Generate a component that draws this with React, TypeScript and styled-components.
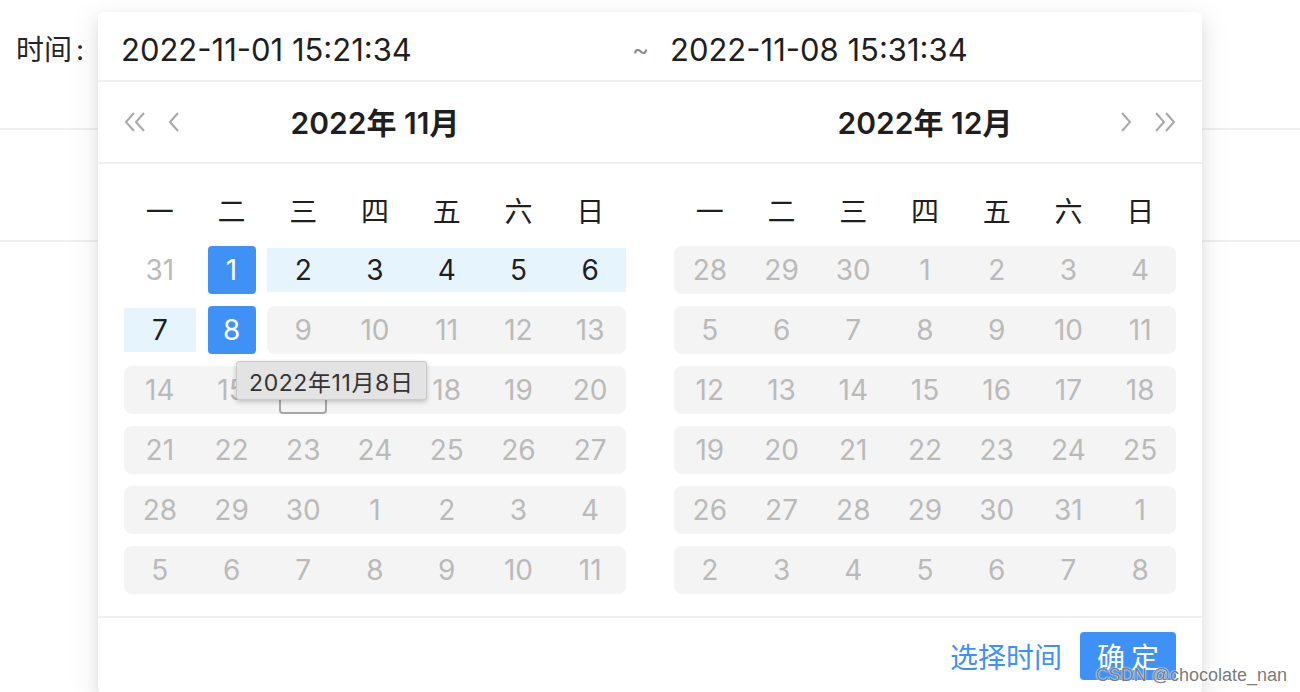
import React from "react";
import styled, { createGlobalStyle, css } from "styled-components";

const GlobalStyle = createGlobalStyle`
  html, body {
    margin: 0;
    height: 100%;
    overflow: hidden;
    background: #fff;
    font-family: Inter, "Noto Sans CJK SC", sans-serif;
    color: #1f1f1f;
  }
`;

const BLUE = "#4091f5";

const Page = styled.div`
  position: relative;
  width: 1300px;
  height: 692px;
`;

const FilterBar = styled.div`
  height: 130px;
  border-bottom: 2px solid #f0f0f0;
  display: flex;
  align-items: flex-start;
  padding: 30px 16px 0;
  box-sizing: border-box;
`;

const Label = styled.label`
  font-size: 28px;
  line-height: 40px;
  color: #262626;
`;

const Colon = styled.span`
  margin: 0 8px 0 4px;
`;

const TableHead = styled.div`
  height: 110px;
  border-bottom: 2px solid #f0f0f0;
`;

const Popup = styled.div`
  position: absolute;
  left: 98px;
  top: 12px;
  width: 1104px;
  background: #fff;
  border-radius: 6px;
  box-shadow: 0 6px 16px 0 rgba(0, 0, 0, 0.08), 0 3px 6px -4px rgba(0, 0, 0, 0.12),
    0 9px 28px 8px rgba(0, 0, 0, 0.05);
`;

const InputRow = styled.div`
  height: 70px;
  box-sizing: border-box;
  padding: 6px 23px 0;
  display: grid;
  grid-template-columns: 509px 40px 1fr;
  align-items: center;
  border-bottom: 2px solid #f0f0f0;
  font-size: 31px;
  color: #1f1f1f;
`;

const Separator = styled.span`
  color: #8c8c8c;
  padding-left: 2px;
  font-size: 26px;
`;

const HeaderRow = styled.div`
  height: 80px;
  display: flex;
  gap: 48px;
  padding: 0 26px;
  border-bottom: 2px solid #f0f0f0;
`;

const PanelHeader = styled.div`
  width: 502px;
  display: grid;
  grid-template-columns: 1fr auto 1fr;
  align-items: center;
`;

const Arrows = styled.div<{ $end?: boolean }>`
  display: flex;
  align-items: center;
  gap: 22px;
  justify-content: ${(p) => (p.$end ? "flex-end" : "flex-start")};
  color: #a8a8a8;
`;

const Title = styled.div`
  font-size: 30px;
  font-weight: 600;
  color: #1f1f1f;
  margin-top: -2px;
`;

const Body = styled.div`
  display: flex;
  gap: 48px;
  padding: 22px 26px;
  border-bottom: 2px solid #f0f0f0;
`;

const Grid = styled.div`
  width: 502px;
  display: grid;
  grid-template-columns: repeat(7, 1fr);
  row-gap: 12px;
`;

const WeekDay = styled.div`
  height: 48px;
  display: flex;
  align-items: center;
  justify-content: center;
  font-size: 28px;
  color: #1f1f1f;
`;

type Kind = "normal" | "out" | "range" | "selected" | "disabled";

const Cell = styled.div<{ $kind: Kind; $left: boolean; $right: boolean }>`
  height: 48px;
  display: flex;
  align-items: center;
  justify-content: center;
  ${(p) =>
    p.$kind === "range" &&
    css`
      background: #e6f4fe;
      height: 44px;
      margin: 2px 0;
    `}
  ${(p) =>
    p.$kind === "disabled" &&
    css`
      background: #f4f4f4;
      border-top-left-radius: ${p.$left ? "8px" : "0"};
      border-bottom-left-radius: ${p.$left ? "8px" : "0"};
      border-top-right-radius: ${p.$right ? "8px" : "0"};
      border-bottom-right-radius: ${p.$right ? "8px" : "0"};
    `}
`;

const Inner = styled.div<{ $kind: Kind; $today?: boolean }>`
  width: 48px;
  height: 48px;
  box-sizing: border-box;
  border-radius: 4px;
  display: flex;
  align-items: center;
  justify-content: center;
  font-size: 28px;
  color: ${(p) =>
    p.$kind === "selected"
      ? "#fff"
      : p.$kind === "out" || p.$kind === "disabled"
      ? "#bababa"
      : "#1f1f1f"};
  background: ${(p) => (p.$kind === "selected" ? BLUE : "transparent")};
  border: ${(p) => (p.$today ? "2px solid #a6a6a6" : "none")};
`;

const Footer = styled.div`
  display: flex;
  justify-content: flex-end;
  align-items: center;
  gap: 18px;
  padding: 14px 26px;
`;

const LinkText = styled.span`
  color: ${BLUE};
  font-size: 28px;
`;

const OkButton = styled.button`
  width: 96px;
  height: 48px;
  border: none;
  border-radius: 4px;
  background: ${BLUE};
  color: #fff;
  font-family: inherit;
  font-size: 28px;
  letter-spacing: 6px;
  padding: 0 0 0 6px;
`;

const Tooltip = styled.div`
  position: absolute;
  left: 138px;
  top: 349px;
  height: 37px;
  padding: 0 12px;
  display: flex;
  align-items: center;
  background: #e3e3e3;
  border: 1px solid #cacaca;
  border-radius: 3px;
  box-shadow: 0 2px 5px rgba(0, 0, 0, 0.22);
  font-size: 23px;
  letter-spacing: 0.6px;
  color: #333;
  white-space: nowrap;
`;

const Watermark = styled.div`
  position: absolute;
  right: 13px;
  bottom: 6px;
  font-family: "Liberation Sans", Arial, sans-serif;
  font-size: 18px;
  color: rgba(105, 105, 105, 0.9);
  text-shadow: 0 0 2px #fff, 0 0 1px #fff;
`;

const DoubleLeft = () => (
  <svg width="22" height="20" viewBox="0 0 22 20" fill="none" stroke="currentColor" strokeWidth="2">
    <path d="M10 1 L2 10 L10 19" />
    <path d="M20 1 L12 10 L20 19" />
  </svg>
);

const SingleLeft = () => (
  <svg width="11" height="20" viewBox="0 0 11 20" fill="none" stroke="currentColor" strokeWidth="2">
    <path d="M10 1 L2 10 L10 19" />
  </svg>
);

const DoubleRight = () => (
  <svg width="22" height="20" viewBox="0 0 22 20" fill="none" stroke="currentColor" strokeWidth="2">
    <path d="M2 1 L10 10 L2 19" />
    <path d="M12 1 L20 10 L12 19" />
  </svg>
);

const SingleRight = () => (
  <svg width="11" height="20" viewBox="0 0 11 20" fill="none" stroke="currentColor" strokeWidth="2">
    <path d="M1 1 L9 10 L1 19" />
  </svg>
);

const weekDays = ["一", "二", "三", "四", "五", "六", "日"];

interface Day {
  n: number;
  kind: Kind;
  today?: boolean;
}

// November: Oct 31 .. Dec 11
const novDays: Day[] = (() => {
  const nums = [31, ...Array.from({ length: 30 }, (_, i) => i + 1), ...Array.from({ length: 11 }, (_, i) => i + 1)];
  return nums.map((n, i) => {
    let kind: Kind = "disabled";
    if (i === 0) kind = "out";
    else if (i === 1 || i === 8) kind = "selected";
    else if (i >= 2 && i <= 7) kind = "range";
    return { n, kind, today: i === 16 };
  });
})();

// December: Nov 28 .. Jan 8
const decDays: Day[] = [
  28, 29, 30,
  ...Array.from({ length: 31 }, (_, i) => i + 1),
  ...Array.from({ length: 8 }, (_, i) => i + 1),
].map((n) => ({ n, kind: "disabled" as Kind }));

const MonthGrid: React.FC<{ days: Day[] }> = ({ days }) => (
  <Grid>
    {weekDays.map((w) => (
      <WeekDay key={w}>{w}</WeekDay>
    ))}
    {days.map((d, i) => {
      const col = i % 7;
      const prev = col > 0 ? days[i - 1] : undefined;
      const next = col < 6 ? days[i + 1] : undefined;
      return (
        <Cell
          key={i}
          $kind={d.kind}
          $left={!prev || prev.kind !== "disabled"}
          $right={!next || next.kind !== "disabled"}
        >
          <Inner $kind={d.kind} $today={d.today}>
            {d.n}
          </Inner>
        </Cell>
      );
    })}
  </Grid>
);

export default function App() {
  return (
    <Page>
      <GlobalStyle />
      <FilterBar>
        <Label>
          时间<Colon>:</Colon>
        </Label>
      </FilterBar>
      <TableHead />

      <Popup>
        <InputRow>
          <span>2022-11-01 15:21:34</span>
          <Separator>~</Separator>
          <span>2022-11-08 15:31:34</span>
        </InputRow>

        <HeaderRow>
          <PanelHeader>
            <Arrows>
              <DoubleLeft />
              <SingleLeft />
            </Arrows>
            <Title>2022年 11月</Title>
            <Arrows />
          </PanelHeader>
          <PanelHeader>
            <Arrows />
            <Title>2022年 12月</Title>
            <Arrows $end>
              <SingleRight />
              <DoubleRight />
            </Arrows>
          </PanelHeader>
        </HeaderRow>

        <Body>
          <MonthGrid days={novDays} />
          <MonthGrid days={decDays} />
        </Body>

        <Footer>
          <LinkText>选择时间</LinkText>
          <OkButton>确定</OkButton>
        </Footer>

        <Tooltip>2022年11月8日</Tooltip>
      </Popup>

      <Watermark>CSDN @chocolate_nan</Watermark>
    </Page>
  );
}
